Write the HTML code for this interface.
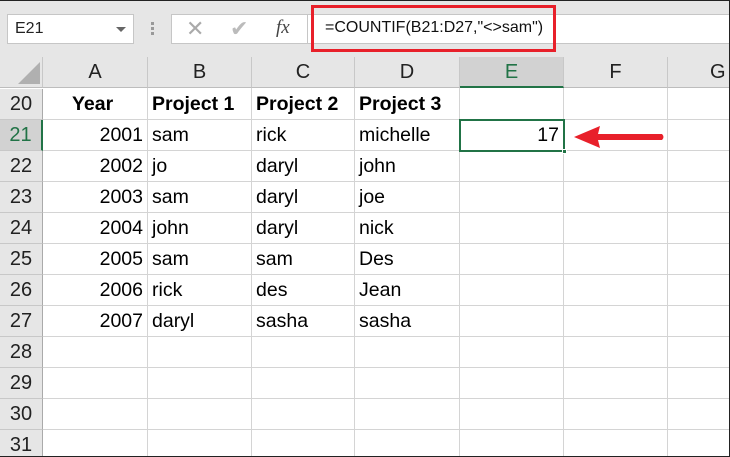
<!DOCTYPE html><html style="overflow:hidden;width:730px;height:457px"><head><style>
*{margin:0;padding:0;box-sizing:border-box}
body{width:730px;height:457px;overflow:hidden;background:#fff;font-family:"Liberation Sans",Arial,sans-serif;position:relative}
.tb{position:absolute;left:0;top:0;width:730px;height:57px;background:#e6e6e6}
.abs{position:absolute}
.v{position:absolute;top:88px;width:1px;height:369px;background:#d4d4d4}
.h{position:absolute;left:0;width:730px;height:1px;background:#d4d4d4}
.ch{position:absolute;top:57px;height:31px;background:#e6e6e6;font-size:20px;color:#222;text-align:center;line-height:31px;border-right:1px solid #c8c8c8;border-bottom:1px solid #bdbdbd}
.rh{position:absolute;left:0;width:43px;height:31px;background:#e6e6e6;font-size:20px;color:#222;text-align:center;line-height:31px;border-bottom:1px solid #c8c8c8;border-right:1px solid #aaa}
.c{position:absolute;height:31px;line-height:31px;font-size:19.5px;color:#000;padding:0 4px;white-space:nowrap}
.b{font-weight:bold}
.r{text-align:right}
</style></head><body>
<div class="tb"></div>
<div class="abs" style="left:7px;top:14px;width:127px;height:30px;background:#fff;border:1px solid #c6c6c6;font-size:16px;line-height:28px;padding-left:7px;color:#222">E21</div>
<div class="abs" style="left:116px;top:27px;width:0;height:0;border-left:5px solid transparent;border-right:5px solid transparent;border-top:5px solid #666"></div>
<div class="abs" style="left:151px;top:22px;width:3px;height:14px;background:repeating-linear-gradient(#999 0 3px,transparent 3px 5px)"></div>
<div class="abs" style="left:171px;top:14px;width:137px;height:30px;background:#fff;border:1px solid #c6c6c6"></div>
<div class="abs" style="left:186px;top:16px;font-size:22px;color:#aaa">✕</div>
<div class="abs" style="left:230px;top:16px;font-size:22px;color:#bbb">✔</div>
<div class="abs" style="left:276px;top:17px;font-size:19px;color:#444;font-style:italic;font-family:'Liberation Serif',serif">fx</div>
<div class="abs" style="left:308px;top:14px;width:422px;height:30px;background:#fff;border-top:1px solid #c6c6c6;border-bottom:1px solid #c6c6c6"></div>
<div class="abs" style="left:325px;top:19px;font-size:16px;color:#111">=COUNTIF(B21:D27,"&lt;&gt;sam")</div>
<div class="abs" style="left:311px;top:5px;width:245px;height:47px;border:3px solid #e8202a"></div>
<div class="abs" style="left:0;top:57px;width:43px;height:31px;background:#e6e6e6;border-right:1px solid #c8c8c8;border-bottom:1px solid #bdbdbd"></div>
<div class="abs" style="left:18px;top:62px;width:0;height:0;border-left:22px solid transparent;border-bottom:22px solid #b0b0b0"></div>
<div class="ch" style="left:43px;width:105px">A</div>
<div class="ch" style="left:148px;width:104px">B</div>
<div class="ch" style="left:252px;width:103px">C</div>
<div class="ch" style="left:355px;width:105px">D</div>
<div class="ch" style="left:460px;width:104px;background:#d2d2d2;border-bottom:2px solid #217346;color:#217346">E</div>
<div class="ch" style="left:564px;width:104px">F</div>
<div class="ch" style="left:668px;width:62px;text-align:left;padding-left:42px">G</div>
<div class="v" style="left:147px"></div><div class="v" style="left:251px"></div><div class="v" style="left:354px"></div><div class="v" style="left:459px"></div><div class="v" style="left:563px"></div><div class="v" style="left:667px"></div>
<div class="h" style="top:119px"></div><div class="h" style="top:150px"></div><div class="h" style="top:181px"></div><div class="h" style="top:212px"></div><div class="h" style="top:243px"></div><div class="h" style="top:274px"></div><div class="h" style="top:305px"></div><div class="h" style="top:336px"></div><div class="h" style="top:367px"></div><div class="h" style="top:398px"></div><div class="h" style="top:429px"></div>
<div class="rh" style="top:89px">20</div>
<div class="rh" style="top:120px;background:#d2d2d2;color:#217346;border-right:2px solid #217346">21</div>
<div class="rh" style="top:151px">22</div><div class="rh" style="top:182px">23</div><div class="rh" style="top:213px">24</div><div class="rh" style="top:244px">25</div><div class="rh" style="top:275px">26</div><div class="rh" style="top:306px">27</div><div class="rh" style="top:337px">28</div><div class="rh" style="top:368px">29</div><div class="rh" style="top:399px">30</div><div class="rh" style="top:430px">31</div>
<div class="c b" style="left:68px;top:89px">Year</div>
<div class="c b" style="left:148px;top:89px">Project 1</div>
<div class="c b" style="left:252px;top:89px">Project 2</div>
<div class="c b" style="left:355px;top:89px">Project 3</div>
<div class="c r" style="left:43px;width:104px;top:120px">2001</div><div class="c" style="left:148px;top:120px">sam</div><div class="c" style="left:252px;top:120px">rick</div><div class="c" style="left:355px;top:120px">michelle</div>
<div class="c r" style="left:43px;width:104px;top:151px">2002</div><div class="c" style="left:148px;top:151px">jo</div><div class="c" style="left:252px;top:151px">daryl</div><div class="c" style="left:355px;top:151px">john</div>
<div class="c r" style="left:43px;width:104px;top:182px">2003</div><div class="c" style="left:148px;top:182px">sam</div><div class="c" style="left:252px;top:182px">daryl</div><div class="c" style="left:355px;top:182px">joe</div>
<div class="c r" style="left:43px;width:104px;top:213px">2004</div><div class="c" style="left:148px;top:213px">john</div><div class="c" style="left:252px;top:213px">daryl</div><div class="c" style="left:355px;top:213px">nick</div>
<div class="c r" style="left:43px;width:104px;top:244px">2005</div><div class="c" style="left:148px;top:244px">sam</div><div class="c" style="left:252px;top:244px">sam</div><div class="c" style="left:355px;top:244px">Des</div>
<div class="c r" style="left:43px;width:104px;top:275px">2006</div><div class="c" style="left:148px;top:275px">rick</div><div class="c" style="left:252px;top:275px">des</div><div class="c" style="left:355px;top:275px">Jean</div>
<div class="c r" style="left:43px;width:104px;top:306px">2007</div><div class="c" style="left:148px;top:306px">daryl</div><div class="c" style="left:252px;top:306px">sasha</div><div class="c" style="left:355px;top:306px">sasha</div>
<div class="abs" style="left:459px;top:119px;width:106px;height:33px;border:2px solid #217346"></div>
<div class="abs" style="left:562px;top:149px;width:5px;height:5px;background:#217346;border:1px solid #fff"></div>
<div class="c r" style="left:460px;width:103px;top:120px">17</div>
<svg class="abs" style="left:570px;top:124px" width="96" height="26"><path d="M4 13 L30 2 L28 10 L92 10 Q95 13 92 16 L28 16 L30 24 Z" fill="#e8202a"/></svg>
<div class="abs" style="left:0;top:0;width:730px;height:457px;border:1px solid #222;border-left:none"></div>
</body></html>
